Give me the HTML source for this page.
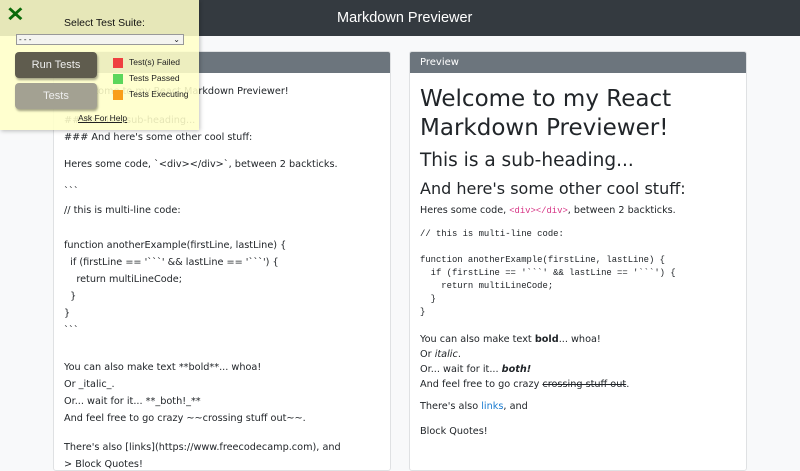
<!DOCTYPE html>
<html><head><meta charset="utf-8"><style>
*{margin:0;padding:0;box-sizing:border-box}
body{width:800px;height:450px;overflow:hidden;background:#f8f9fa;font-family:"DejaVu Sans","Liberation Sans",sans-serif;color:#212529;position:relative}
.nav{position:absolute;left:0;top:0;width:800px;height:36px;background:#343a40;color:#fff;line-height:36px}
.nav span{position:absolute;left:337px;top:0;font-family:"Liberation Sans",sans-serif;font-size:14.5px}
.card{position:absolute;top:51px;width:338px;height:420px;background:#fff;border:1px solid #dfe1e3;border-radius:3px;overflow:hidden}
.hd{height:21px;background:#6c757d;color:#fff;font-size:10px;line-height:21px;padding-left:10px}
.l{position:absolute;left:10px;white-space:pre;font-size:9.7px;line-height:12px}
.r{position:absolute;left:10px;white-space:pre}
.m{font-family:"Liberation Mono",monospace;font-size:8.9px;color:#212529}
.panel{position:absolute;left:0;top:0;width:199px;height:130px;background:rgba(255,255,200,0.88);box-shadow:1px 1px 4px rgba(0,0,0,.25);font-family:"Liberation Sans",sans-serif}
.btn{position:absolute;left:15px;width:82px;height:26px;border-radius:4px;color:#eee;font-size:11px;text-align:center;line-height:26px;box-shadow:1px 2px 2px rgba(0,0,0,.35)}
.sq{position:absolute;left:113px;width:10px;height:10px}
.lg{position:absolute;left:129px;font-size:8.5px;color:#222}
</style></head><body>
<div class="nav"><span>Markdown Previewer</span></div>

<div class="card" style="left:53px">
<div class="hd">Editor</div>
<div class="l" style="top:34px"># Welcome to my React Markdown Previewer!</div>
<div class="l" style="top:63px">## This is a sub-heading...</div>
<div class="l" style="top:80px">### And here's some other cool stuff:</div>
<div class="l" style="top:107px">Heres some code, &#96;&lt;div&gt;&lt;/div&gt;&#96;, between 2 backticks.</div>
<div class="l" style="top:134px">&#96;&#96;&#96;</div>
<div class="l" style="top:153px">// this is multi-line code:</div>
<div class="l" style="top:188px">function anotherExample(firstLine, lastLine) {</div>
<div class="l" style="top:205px">  if (firstLine == '&#96;&#96;&#96;' &amp;&amp; lastLine == '&#96;&#96;&#96;') {</div>
<div class="l" style="top:222px">    return multiLineCode;</div>
<div class="l" style="top:239px">  }</div>
<div class="l" style="top:256px">}</div>
<div class="l" style="top:273px">&#96;&#96;&#96;</div>
<div class="l" style="top:310px">You can also make text **bold**... whoa!</div>
<div class="l" style="top:327px">Or _italic_.</div>
<div class="l" style="top:344px">Or... wait for it... **_both!_**</div>
<div class="l" style="top:361px">And feel free to go crazy ~~crossing stuff out~~.</div>
<div class="l" style="top:390px">There's also [links](https://www.freecodecamp.com), and</div>
<div class="l" style="top:407px">&gt; Block Quotes!</div>
</div>

<div class="card" style="left:409px">
<div class="hd">Preview</div>
<div class="r" style="top:33px;font-size:23px;line-height:29px">Welcome to my React
Markdown Previewer!</div>
<div class="r" style="top:98px;font-size:18.5px">This is a sub-heading...</div>
<div class="r" style="top:127px;font-size:16px">And here's some other cool stuff:</div>
<div class="r" style="top:153px;font-size:9.6px">Heres some code, <span class="m" style="color:#d63384">&lt;div&gt;&lt;/div&gt;</span>, between 2 backticks.</div>
<div class="r m" style="top:176px;line-height:13px">// this is multi-line code:

function anotherExample(firstLine, lastLine) {
  if (firstLine == '&#96;&#96;&#96;' &amp;&amp; lastLine == '&#96;&#96;&#96;') {
    return multiLineCode;
  }
}</div>
<div class="r" style="top:280px;font-size:9.7px;line-height:15px">You can also make text <b>bold</b>... whoa!
Or <i>italic</i>.
Or... wait for it... <b><i>both!</i></b>
And feel free to go crazy <s>crossing stuff out</s>.</div>
<div class="r" style="top:349px;font-size:9.7px">There's also <span style="color:#1a7bd0">links</span>, and</div>
<div class="r" style="top:374px;font-size:9.7px">Block Quotes!</div>
</div>

<div class="panel">
<div style="position:absolute;left:7px;top:2px;color:#0a6b0a;font-size:20px;font-weight:bold;font-family:'Liberation Sans',sans-serif;transform:scaleX(1.1)">✕</div>
<div style="position:absolute;left:64px;top:17px;font-size:10.5px;color:#111">Select Test Suite:</div>
<div style="position:absolute;left:16px;top:34px;width:168px;height:11px;background:#f4f4f0;border:1px solid #999;font-size:8px;line-height:9px;padding-left:2px">- - -<span style="position:absolute;right:3px;top:0;font-size:8px">⌄</span></div>
<div class="btn" style="top:52px;background:#5f5c4e">Run Tests</div>
<div class="btn" style="top:83px;background:#a3a192">Tests</div>
<div class="sq" style="top:58px;background:#ef4040"></div>
<div class="sq" style="top:74px;background:#5cd65c"></div>
<div class="sq" style="top:90px;background:#f99e1a"></div>
<div class="lg" style="top:57px">Test(s) Failed</div>
<div class="lg" style="top:73px">Tests Passed</div>
<div class="lg" style="top:89px">Tests Executing</div>
<div style="position:absolute;left:78px;top:113px;font-size:8.5px;text-decoration:underline;color:#222">Ask For Help</div>
</div>
</body></html>
